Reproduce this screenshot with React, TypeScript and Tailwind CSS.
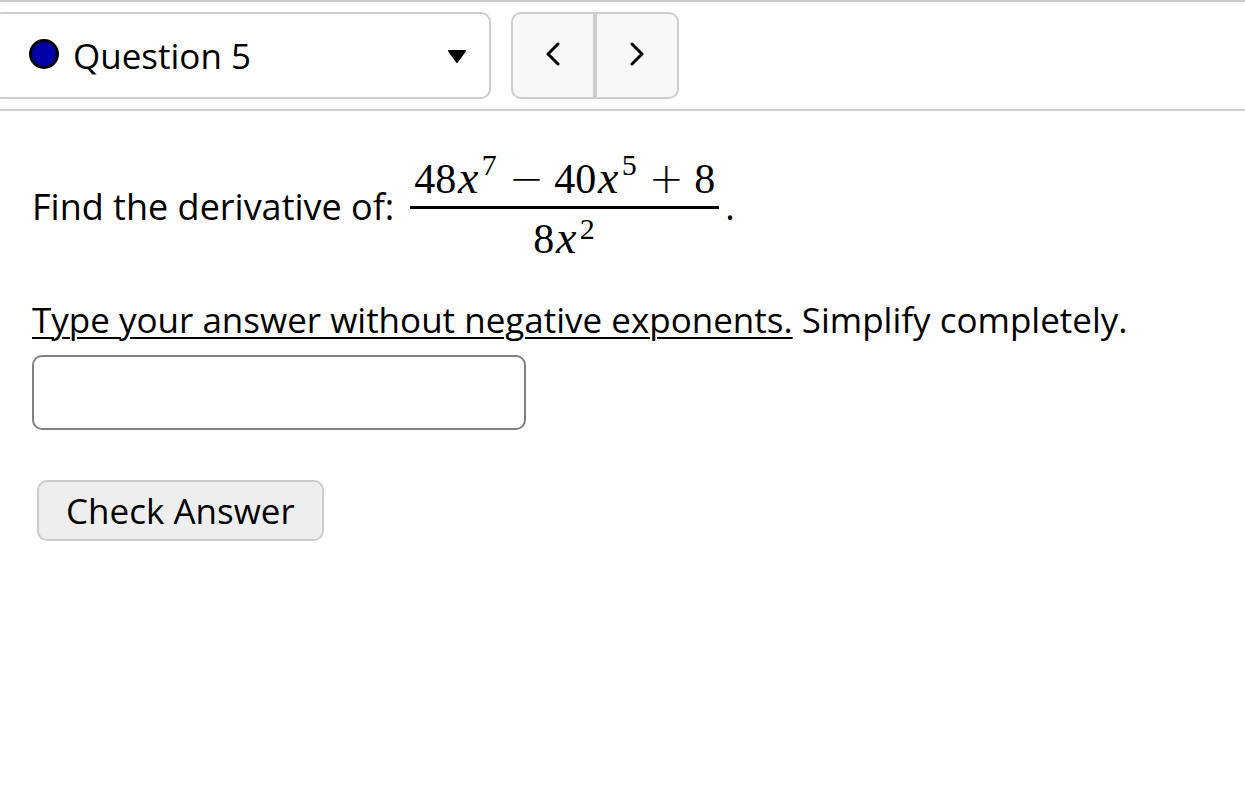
import { useState } from "react";
import type { ReactNode } from "react";

const QUESTIONS = ["Question 5"];

export default function App() {
  const [question, setQuestion] = useState(QUESTIONS[0]);
  const [answer, setAnswer] = useState("");

  return (
    <div className="min-h-screen bg-white text-black text-[35px] leading-10 font-['Trebuchet_MS','Open_Sans',sans-serif]">
      <header className="flex gap-5 border-y-2 border-[#ccc] py-[10px]">
        <div className="relative -ml-2 w-[499px]">
          <select
            aria-label="Question"
            value={question}
            onChange={e => setQuestion(e.target.value)}
            className="block h-[87px] w-full appearance-none rounded-[10px] border-2 border-[#ccc] bg-white pl-[79px] pr-16"
          >
            {QUESTIONS.map(q => <option key={q}>{q}</option>)}
          </select>
          {/* status dot and arrow sit over the select */}
          <svg
            viewBox="0 0 30 30"
            className="pointer-events-none absolute left-[37px] top-[27px] size-[30px]"
          >
            <circle cx="15" cy="15" r="13.5" fill="#0000a8" stroke="#000" strokeWidth="3"/>
          </svg>
          <svg
            viewBox="0 0 18 13"
            className="pointer-events-none absolute right-[25px] top-[38px] h-[13px] w-[18px]"
          >
            <path d="M1 1H17L9 12Z" stroke="#000" strokeWidth="2" strokeLinejoin="round"/>
          </svg>
        </div>

        <nav className="flex">
          <NavButton label="Previous question" className="rounded-l-[10px]">
            <path d="M12 2L2 12L12 22"/>
          </NavButton>
          <NavButton label="Next question" className="rounded-r-[10px]">
            <path d="M2 2L12 12L2 22"/>
          </NavButton>
        </nav>
      </header>

      <main className="px-8 pt-10">
        <div className="flex items-center text-[36px]">
          <span>Find the derivative of:</span>
          <Fraction
            top={
              <>
                48<Power exp="7"/><Op>−</Op>40<Power exp="5"/><Op>+</Op>8
              </>
            }
            bottom={<>8<Power exp="2"/></>}
          />
          <span>.</span>
        </div>

        <label htmlFor="answer" className="mt-[38px] block">
          <u className="decoration-2 underline-offset-4">Type your answer without negative exponents.</u>
          {" "}Simplify completely.
        </label>
        <input
          id="answer"
          type="text"
          value={answer}
          onChange={e => setAnswer(e.target.value)}
          className="mt-[15px] block h-[75px] w-[494px] max-w-full rounded-[10px] border-2 border-[#808080] px-3"
        />

        <button
          type="button"
          className="ml-[5px] mt-[50px] block h-[61px] rounded-[10px] border-2 border-[#ccc] bg-[#eee] px-[27px]"
        >
          Check Answer
        </button>
      </main>
    </div>
  );
}

function NavButton(
  { label, className, children }: { label: string; className: string; children: ReactNode },
) {
  return (
    <button
      type="button"
      aria-label={label}
      className={`flex h-[87px] w-[84px] items-center justify-center border-2 border-[#ccc] bg-[#f8f8f8] pb-1 ${className}`}
    >
      <svg
        viewBox="0 0 14 24"
        fill="none"
        stroke="#000"
        strokeWidth="3"
        strokeLinecap="round"
        strokeLinejoin="round"
        className="h-6 w-[14px]"
      >
        {children}
      </svg>
    </button>
  );
}

function Fraction({ top, bottom }: { top: ReactNode; bottom: ReactNode }) {
  return (
    <span className="ml-4 mr-[6px] inline-flex flex-col text-[42px] font-['Liberation_Serif',serif]">
      <span className="flex items-baseline justify-center border-b-3 border-black px-1 leading-[54px]">{top}</span>
      <span className="flex items-baseline justify-center pt-[6px] leading-[46px]">{bottom}</span>
    </span>
  );
}

function Power({ exp }: { exp: string }) {
  return (
    <>
      <i className="w-6 text-center text-[46px]">x</i>
      <sup className="static w-[18px] self-start text-center text-[30px] leading-7">{exp}</sup>
    </>
  );
}

function Op({ children }: { children: ReactNode }) {
  return (
    <span className="mx-3 w-8 text-center font-extralight font-['DejaVu_Sans',sans-serif]">
      <span className="-mx-1">{children}</span>
    </span>
  );
}
